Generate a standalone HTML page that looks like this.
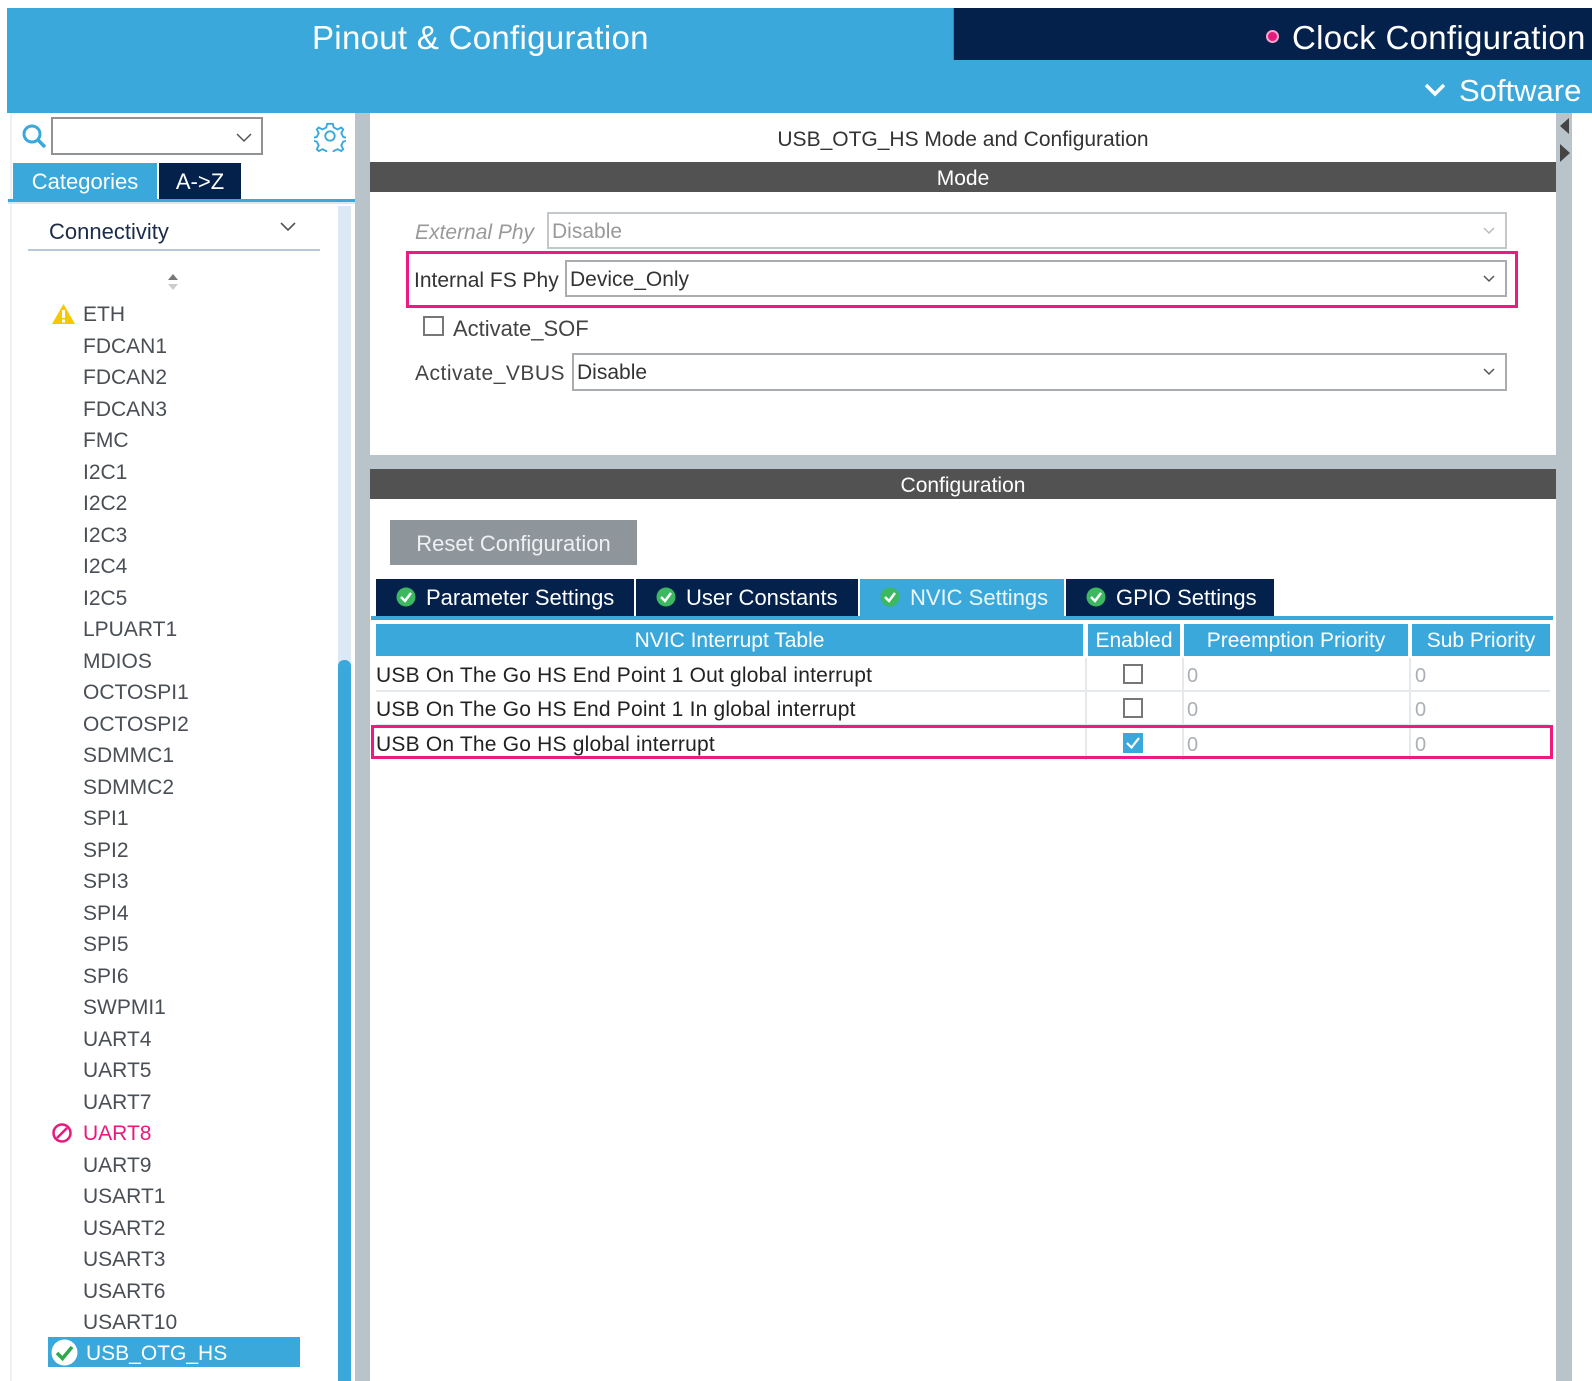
<!DOCTYPE html>
<html><head><meta charset="utf-8">
<style>
*{margin:0;padding:0;box-sizing:border-box}
body{width:1592px;height:1381px;background:#fff;position:relative;overflow:hidden;font-family:"Liberation Sans",sans-serif;color:#333;letter-spacing:0}
.a{position:absolute}
.blue{background:#3aa8db}
.navy{background:#03214a}
.t{white-space:nowrap}
.li{position:absolute;left:83px;font-size:21px;color:#4a4f55;line-height:24px;margin-top:2px}
.combo{position:absolute;border:2px solid #a9adb0;background:#fff;font-size:21px;line-height:35px;padding-left:3px;color:#333}
.chev{position:absolute;right:10px;top:11px;width:12px;height:12px}
.th{position:absolute;top:624px;height:32px;background:#3aa8db;color:#fff;font-size:21px;line-height:34px;text-align:center}
.row{position:absolute;left:376px;width:1174px;height:34px;border-bottom:2px solid #e6e9ec}
.rt{position:absolute;left:376px;font-size:21px;line-height:24px;color:#222;letter-spacing:0.2px}
.cb{position:absolute;left:1123px;width:20px;height:20px;border:2px solid #777;background:#fff}
.z{position:absolute;font-size:20px;color:#aab0b5;line-height:24px}
.tab{position:absolute;top:579px;height:37px;color:#fff;font-size:22px;line-height:37px}
.ok{display:inline-block;vertical-align:middle;margin:-4px 10px 0 20px}
</style></head><body>
<div class="a blue" style="left:7px;top:8px;width:1585px;height:105px"></div>
<div class="a navy" style="left:953px;top:8px;width:639px;height:52px;border-left:1px solid #5a7aa0"></div>
<div class="a t" style="left:312px;top:19px;font-size:33px;color:#fff;letter-spacing:0.3px">Pinout &amp; Configuration</div>
<div class="a" style="left:1266px;top:30px;width:13px;height:13px;border-radius:50%;background:#e6197c;border:2px solid #f7a6cf"></div>
<div class="a t" style="left:1292px;top:19px;font-size:33px;color:#fff;letter-spacing:0.3px">Clock Configuration</div>
<svg class="a" style="left:1423px;top:82px" width="24" height="16"><path d="M3 3 L12 12 L21 3" stroke="#fff" stroke-width="3.5" fill="none"/></svg>
<div class="a t" style="left:1459px;top:73px;font-size:31px;color:#fff">Software P</div>

<div class="a" style="left:10px;top:113px;width:2px;height:1268px;background:#eef0f2"></div>
<svg class="a" style="left:20px;top:122px" width="28" height="28"><circle cx="12" cy="12" r="8" stroke="#3aa8db" stroke-width="3" fill="none"/><path d="M18 18 L25 25" stroke="#3aa8db" stroke-width="3.5"/></svg>
<div class="a" style="left:51px;top:117px;width:212px;height:38px;border:2px solid #8f9396"></div>
<svg class="a" style="left:235px;top:131px" width="18" height="14"><path d="M2 3 L9 10 L16 3" stroke="#555" stroke-width="1.5" fill="none"/></svg>
<svg class="a" style="left:314px;top:120px" width="32" height="32" viewBox="0 0 34 34"><g fill="none" stroke="#3aa8db" stroke-width="2"><circle cx="17" cy="17" r="5"/><path d="M17 4 l3 0 1 4 4 2 4-2 2 2-2 4 2 4 4 1 0 3-4 1-2 4 2 4-2 2-4-2-4 2-1 4-3 0-3 0-1-4-4-2-4 2-2-2 2-4-2-4-4-1 0-3 4-1 2-4-2-4 2-2 4 2 4-2 1-4z"/></g></svg>
<div class="a blue t" style="left:13px;top:163px;width:144px;height:36px;color:#fff;font-size:22px;line-height:38px;text-align:center">Categories</div>
<div class="a navy t" style="left:159px;top:163px;width:82px;height:36px;color:#fff;font-size:22px;line-height:38px;text-align:center">A-&gt;Z</div>
<div class="a blue" style="left:8px;top:199px;width:347px;height:3px"></div>
<div class="a" style="left:8px;top:202px;width:347px;height:2px;background:#d8e8f2"></div>
<div class="a t" style="left:49px;top:219px;font-size:22px;color:#1c2b4a">Connectivity</div>
<svg class="a" style="left:279px;top:221px" width="18" height="13"><path d="M2 2 L9 9 L16 2" stroke="#555" stroke-width="1.6" fill="none"/></svg>
<div class="a" style="left:28px;top:249px;width:292px;height:2px;background:#b8c8d8"></div>
<svg class="a" style="left:166px;top:272px" width="14" height="20"><path d="M7 2 L12 8 L2 8Z" fill="#777"/><path d="M7 18 L12 12 L2 12Z" fill="#ccc"/></svg>
<div class="a" style="left:338px;top:206px;width:13px;height:1175px;background:#dce9f5"></div>
<div class="a blue" style="left:338px;top:660px;width:13px;height:721px;border-radius:6px 6px 0 0"></div>
<div class="a" style="left:355px;top:113px;width:15px;height:1268px;background:#b9c3ca"></div>

<svg class="a" style="left:51px;top:303px" width="25" height="22"><path d="M12.5 1 L24 21 L1 21Z" fill="#f7c800"/><rect x="11" y="7" width="3" height="8" fill="#fff"/><rect x="11" y="16.5" width="3" height="3" fill="#fff"/></svg>
<div class="li" style="top:301px">ETH</div>
<div class="li" style="top:333px">FDCAN1</div>
<div class="li" style="top:364px">FDCAN2</div>
<div class="li" style="top:396px">FDCAN3</div>
<div class="li" style="top:427px">FMC</div>
<div class="li" style="top:459px">I2C1</div>
<div class="li" style="top:490px">I2C2</div>
<div class="li" style="top:522px">I2C3</div>
<div class="li" style="top:553px">I2C4</div>
<div class="li" style="top:585px">I2C5</div>
<div class="li" style="top:616px">LPUART1</div>
<div class="li" style="top:648px">MDIOS</div>
<div class="li" style="top:679px">OCTOSPI1</div>
<div class="li" style="top:711px">OCTOSPI2</div>
<div class="li" style="top:742px">SDMMC1</div>
<div class="li" style="top:774px">SDMMC2</div>
<div class="li" style="top:805px">SPI1</div>
<div class="li" style="top:837px">SPI2</div>
<div class="li" style="top:868px">SPI3</div>
<div class="li" style="top:900px">SPI4</div>
<div class="li" style="top:931px">SPI5</div>
<div class="li" style="top:963px">SPI6</div>
<div class="li" style="top:994px">SWPMI1</div>
<div class="li" style="top:1026px">UART4</div>
<div class="li" style="top:1057px">UART5</div>
<div class="li" style="top:1089px">UART7</div>
<svg class="a" style="left:51px;top:1122px" width="22" height="22"><circle cx="11" cy="11" r="8.5" stroke="#e6197c" stroke-width="2.5" fill="none"/><path d="M6 16 L16 6" stroke="#e6197c" stroke-width="2.5"/></svg>
<div class="li" style="top:1120px;color:#e6197c">UART8</div>
<div class="li" style="top:1152px">UART9</div>
<div class="li" style="top:1183px">USART1</div>
<div class="li" style="top:1215px">USART2</div>
<div class="li" style="top:1246px">USART3</div>
<div class="li" style="top:1278px">USART6</div>
<div class="li" style="top:1309px">USART10</div>
<div class="a blue" style="left:48px;top:1337px;width:252px;height:30px"></div>
<svg class="a" style="left:50px;top:1338px" width="29" height="29"><circle cx="14.5" cy="14.5" r="13" fill="#fff"/><path d="M7 15 L12.5 20.5 L22 9" stroke="#2ea84a" stroke-width="3.5" fill="none"/></svg>
<div class="li" style="top:1340px;left:86px;color:#fff">USB_OTG_HS</div>

<div class="a t" style="left:370px;top:128px;width:1186px;text-align:center;font-size:21px;color:#333">USB_OTG_HS Mode and Configuration</div>
<div class="a" style="left:370px;top:162px;width:1186px;height:30px;background:#525252;color:#fff;font-size:21px;line-height:34px;text-align:center">Mode</div>
<div class="a" style="left:1556px;top:113px;width:16px;height:1268px;background:#b9c3ca"></div>
<svg class="a" style="left:1556px;top:116px" width="16" height="52"><path d="M13 2 L13 18 L4 10Z" fill="#444"/><path d="M4 28 L4 46 L14 37Z" fill="#444"/></svg>

<div class="a t" style="left:415px;top:221px;font-size:21px;font-style:italic;color:#999">External Phy</div>
<div class="combo" style="left:547px;top:212px;width:960px;height:37px;color:#999;border-color:#c5c8ca">Disable<svg class="chev" viewBox="0 0 12 12"><path d="M1 3 L6 8 L11 3" stroke="#bbb" stroke-width="1.5" fill="none"/></svg></div>
<div class="a" style="left:406px;top:251px;width:1112px;height:57px;border:3px solid #ee1a82"></div>
<div class="a t" style="left:414px;top:269px;font-size:21px;color:#333">Internal FS Phy</div>
<div class="combo" style="left:565px;top:260px;width:942px;height:37px">Device_Only<svg class="chev" viewBox="0 0 12 12"><path d="M1 3 L6 8 L11 3" stroke="#555" stroke-width="1.5" fill="none"/></svg></div>
<div class="a" style="left:423px;top:316px;width:21px;height:20px;border:2px solid #777"></div>
<div class="a t" style="left:453px;top:316px;font-size:22px;color:#444">Activate_SOF</div>
<div class="a t" style="left:415px;top:362px;font-size:21px;color:#444;letter-spacing:0.5px">Activate_VBUS</div>
<div class="combo" style="left:572px;top:353px;width:935px;height:38px">Disable<svg class="chev" viewBox="0 0 12 12"><path d="M1 3 L6 8 L11 3" stroke="#555" stroke-width="1.5" fill="none"/></svg></div>

<div class="a" style="left:370px;top:455px;width:1186px;height:14px;background:#b9c3ca"></div>
<div class="a" style="left:370px;top:469px;width:1186px;height:30px;background:#525252;color:#fff;font-size:21px;line-height:34px;text-align:center">Configuration</div>
<div class="a t" style="left:390px;top:520px;width:247px;height:45px;background:#8e959b;color:#eef0f2;font-size:22px;line-height:47px;text-align:center">Reset Configuration</div>

<div class="tab navy" style="left:376px;width:258px"><svg class="ok" width="20" height="20"><circle cx="10" cy="10" r="9.5" fill="#3cb861"/><path d="M5 10 L9 14 L15 6" stroke="#fff" stroke-width="2.5" fill="none"/></svg>Parameter Settings</div>
<div class="tab navy" style="left:636px;width:222px"><svg class="ok" width="20" height="20"><circle cx="10" cy="10" r="9.5" fill="#3cb861"/><path d="M5 10 L9 14 L15 6" stroke="#fff" stroke-width="2.5" fill="none"/></svg>User Constants</div>
<div class="tab blue" style="left:860px;width:204px;color:#eef6fb"><svg class="ok" width="20" height="20"><circle cx="10" cy="10" r="9.5" fill="#3cb861"/><path d="M5 10 L9 14 L15 6" stroke="#fff" stroke-width="2.5" fill="none"/></svg>NVIC Settings</div>
<div class="tab navy" style="left:1066px;width:208px"><svg class="ok" width="20" height="20"><circle cx="10" cy="10" r="9.5" fill="#3cb861"/><path d="M5 10 L9 14 L15 6" stroke="#fff" stroke-width="2.5" fill="none"/></svg>GPIO Settings</div>
<div class="a blue" style="left:371px;top:616px;width:1182px;height:4px"></div>

<div class="th" style="left:376px;width:707px">NVIC Interrupt Table</div>
<div class="th" style="left:1088px;width:92px">Enabled</div>
<div class="th" style="left:1184px;width:224px">Preemption Priority</div>
<div class="th" style="left:1412px;width:138px">Sub Priority</div>

<div class="row" style="top:658px"></div>
<div class="row" style="top:692px"></div>
<div class="a" style="left:1085px;top:658px;width:2px;height:102px;background:#e6e9ec"></div>
<div class="a" style="left:1182px;top:658px;width:2px;height:102px;background:#e6e9ec"></div>
<div class="a" style="left:1409px;top:658px;width:2px;height:102px;background:#e6e9ec"></div>
<div class="rt" style="top:664px">USB On The Go HS End Point 1 Out global interrupt</div>
<div class="rt" style="top:698px">USB On The Go HS End Point 1 In global interrupt</div>
<div class="rt" style="top:733px">USB On The Go HS global interrupt</div>
<div class="cb" style="top:664px"></div>
<div class="cb" style="top:698px"></div>
<div class="a" style="left:1123px;top:733px;width:20px;height:20px;background:#3aa8db"><svg width="20" height="20"><path d="M4 10 L8.5 14.5 L16 5" stroke="#fff" stroke-width="2.2" fill="none"/></svg></div>
<div class="z" style="left:1187px;top:664px">0</div><div class="z" style="left:1415px;top:664px">0</div>
<div class="z" style="left:1187px;top:698px">0</div><div class="z" style="left:1415px;top:698px">0</div>
<div class="z" style="left:1187px;top:733px">0</div><div class="z" style="left:1415px;top:733px">0</div>
<div class="a" style="left:371px;top:725px;width:1182px;height:34px;border:3px solid #ee1a82"></div>
</body></html>
